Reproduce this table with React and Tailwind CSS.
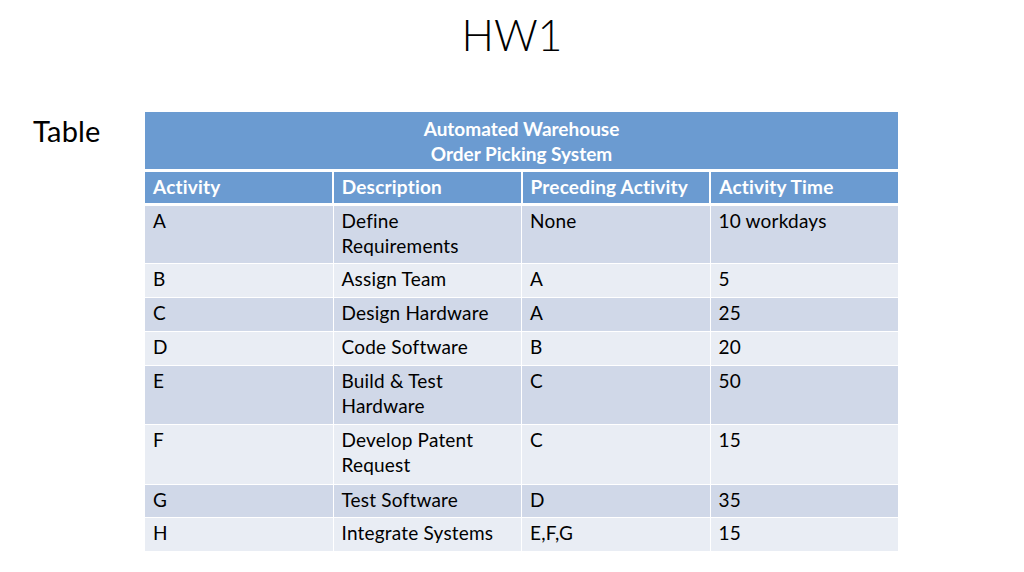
import React from 'react';

const rows = [
  { act: 'A', desc: ['Define', 'Requirements'], pre: 'None', time: '10 workdays', h: 'h-[57px]' },
  { act: 'B', desc: ['Assign Team'], pre: 'A', time: '5', h: 'h-[33px]' },
  { act: 'C', desc: ['Design Hardware'], pre: 'A', time: '25', h: 'h-[33px]' },
  { act: 'D', desc: ['Code Software'], pre: 'B', time: '20', h: 'h-[33px]' },
  { act: 'E', desc: ['Build & Test', 'Hardware'], pre: 'C', time: '50', h: 'h-[58px]' },
  { act: 'F', desc: ['Develop Patent', 'Request'], pre: 'C', time: '15', h: 'h-[59px]' },
  { act: 'G', desc: ['Test Software'], pre: 'D', time: '35', h: 'h-[32px]' },
  { act: 'H', desc: ['Integrate Systems'], pre: 'E,F,G', time: '15', h: 'h-[33px]' },
];

const font = { fontFamily: 'Lato, "Open Sans", sans-serif', fontVariantLigatures: 'none' };

const Cell = ({ children, bg }) => (
  <div className={`${bg} px-2 pt-[2px] leading-[25px] text-[19px] tracking-[0.2px] text-black`}>{children}</div>
);

export default function App() {
  return (
    <div className="w-[1024px] h-[572px] bg-white overflow-hidden" style={font}>
      {/* Title */}
      <div className="h-[68px] flex items-center justify-center">
        <h1 className="text-[43px] font-light text-black leading-none">HW1</h1>
      </div>

      <div className="flex pt-[44px]">
        <div className="w-[145px] pl-[33px] pt-[4px] text-[29px] tracking-[0.2px] text-black leading-none">Table</div>

        <div className="w-[753px] flex flex-col">
          <div className="h-[57px] bg-[#6b9bd1] flex flex-col items-center justify-center text-white font-bold text-[19px] leading-[25px]">
            <span>Automated Warehouse</span>
            <span>Order Picking System</span>
          </div>
          <div className="h-[3px]" />
          <div className="h-[31px] grid grid-cols-4 gap-x-[2px] text-white font-bold text-[19px] tracking-[0.2px]">
            {['Activity', 'Description', 'Preceding Activity', 'Activity Time'].map((t) => (
              <div key={t} className="bg-[#6b9bd1] px-2 flex items-center">{t}</div>
            ))}
          </div>
          <div className="h-[3px]" />
          <div className="flex flex-col gap-y-px">
            {rows.map((r, i) => {
              const bg = i % 2 === 0 ? 'bg-[#d0d8e8]' : 'bg-[#e9edf4]';
              return (
                <div key={r.act} className={`${r.h} grid grid-cols-4 gap-x-px`}>
                  <Cell bg={bg}>{r.act}</Cell>
                  <Cell bg={bg}>
                    {r.desc.map((d) => (
                      <div key={d}>{d}</div>
                    ))}
                  </Cell>
                  <Cell bg={bg}>{r.pre}</Cell>
                  <Cell bg={bg}>{r.time}</Cell>
                </div>
              );
            })}
          </div>
        </div>
      </div>
    </div>
  );
}
